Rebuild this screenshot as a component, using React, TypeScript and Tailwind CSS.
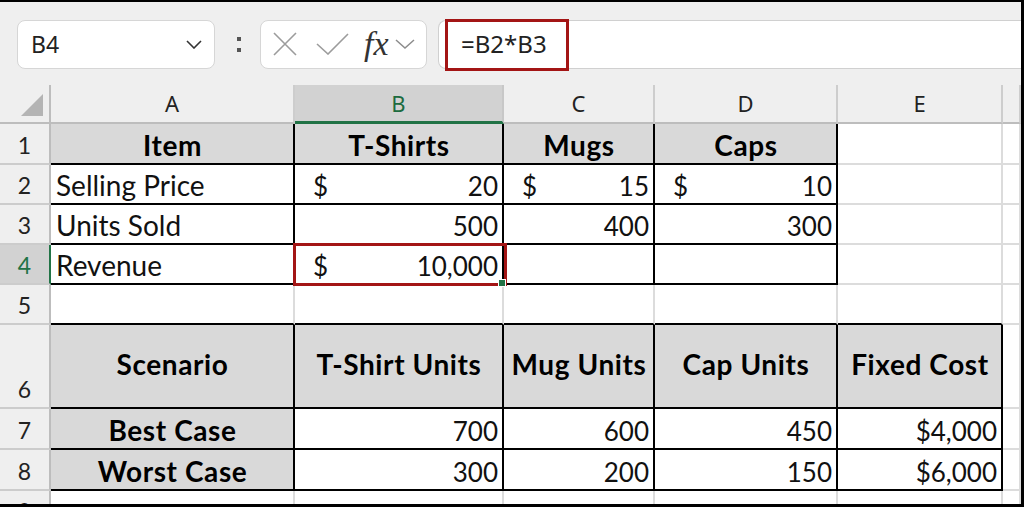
import clsx from "clsx";

type Cell = {
  t?: string;
  cur?: string;
  b?: boolean;
  fill?: boolean;
  al?: "l" | "c" | "r";
  box?: boolean;
  mid?: boolean;
  sel?: boolean;
};

const head = (t: string): Cell => ({ t, b: true, fill: true, al: "c", box: true });
const headMid = (t: string): Cell => ({ ...head(t), mid: true });
const label = (t: string): Cell => ({ t, al: "l", box: true });
const num = (t: string, cur?: string): Cell => ({ t, cur, al: "r", box: true });
const E: Cell = {};
const BX: Cell = { box: true };

const rows: Cell[][] = [
  [head("Item"), head("T-Shirts"), head("Mugs"), head("Caps"), E, E],
  [label("Selling Price"), num("20", "$"), num("15", "$"), num("10", "$"), E, E],
  [label("Units Sold"), num("500"), num("400"), num("300"), E, E],
  [label("Revenue"), { ...num("10,000", "$"), sel: true }, BX, BX, E, E],
  [E, E, E, E, E, E],
  [headMid("Scenario"), headMid("T-Shirt Units"), headMid("Mug Units"), headMid("Cap Units"), headMid("Fixed Cost"), E],
  [head("Best Case"), num("700"), num("600"), num("450"), num("$4,000"), E],
  [head("Worst Case"), num("300"), num("200"), num("150"), num("$6,000"), E],
  [E, E, E, E, E, E],
];

const cols = ["A", "B", "C", "D", "E", ""];

function SheetCell({ r, c }: { r: number; c: number }) {
  const cell = rows[r][c];
  const right = cell.box || rows[r][c + 1]?.box;
  const below = cell.box || rows[r + 1]?.[c]?.box;

  return (
    <div
      className={clsx(
        "relative flex border-r-2 border-b-2 pb-[4px] leading-none whitespace-nowrap",
        right ? "border-r-black" : "border-r-[#dcdcdc]",
        below ? "border-b-black" : "border-b-[#dcdcdc]",
        cell.fill ? "bg-[#d9d9d9]" : "bg-white",
        cell.mid ? "items-center" : "items-end",
        cell.cur ? "justify-between pl-[18px] pr-[4px]" : "pl-[5px] pr-[4px]",
        !cell.cur && (cell.al === "c" ? "justify-center" : cell.al === "r" ? "justify-end" : "justify-start"),
        cell.b
          ? "text-[28px] font-bold tracking-[0.6px] text-black"
          : cell.al === "l"
            ? "text-[28px] text-[#111]"
            : "text-[26px] text-[#111]"
      )}
    >
      {cell.cur && <span>{cell.cur}</span>}
      {cell.t && <span>{cell.t}</span>}
      {cell.sel && (
        <>
          <div className="absolute -left-[2px] -top-[2px] -right-[5px] -bottom-[3px] z-10 border-[3px] border-[#a31515]" />
          <div className="absolute -right-[4px] -bottom-[4px] z-20 h-[8px] w-[8px] border border-white bg-[#217346]" />
        </>
      )}
    </div>
  );
}

function FormulaBar() {
  return (
    <div className="flex h-[52px] shrink-0 items-center">
      <div className="ml-[17px] flex h-[49px] w-[198px] items-center justify-between rounded-[8px] border border-[#d6d6d6] bg-white pl-[13px] pr-[12px]">
        <span className="text-[23px] text-[#222] font-['Noto_Sans',sans-serif]">B4</span>
        <svg width="16" height="9" viewBox="0 0 16 9" fill="none">
          <path d="M1 1L8 8L15 1" stroke="#333" strokeWidth="1.6" />
        </svg>
      </div>

      <div className="ml-[22px] flex w-[4px] flex-col gap-[7px]">
        <div className="h-[4px] w-[4px] bg-[#555]" />
        <div className="h-[4px] w-[4px] bg-[#555]" />
      </div>

      <div className="ml-[19px] flex h-[49px] w-[167px] items-center rounded-[8px] border border-[#d6d6d6] bg-white pl-[12px]">
        <svg width="24" height="24" viewBox="0 0 24 24" fill="none">
          <path d="M1 1L23 23M23 1L1 23" stroke="#9c9c9c" strokeWidth="1.6" />
        </svg>
        <svg className="ml-[19px]" width="33" height="22" viewBox="0 0 33 22" fill="none">
          <path d="M1 11L12 21L32 1" stroke="#9c9c9c" strokeWidth="1.6" />
        </svg>
        <span className="ml-[15px] text-[34px] leading-none italic text-[#333] font-['Liberation_Serif',serif]">fx</span>
        <svg className="ml-[6px]" width="20" height="10" viewBox="0 0 20 10" fill="none">
          <path d="M1 1L10 9L19 1" stroke="#8c8c8c" strokeWidth="1.5" />
        </svg>
      </div>

      <div className="relative ml-[11px] flex h-[49px] flex-1 items-center rounded-l-[8px] border-y border-l border-[#d0d0d0] bg-white pl-[22px]">
        <span className="text-[24px] text-[#222] font-['Noto_Sans',sans-serif]">=B2*B3</span>
        <div className="absolute left-[6px] -top-[2px] h-[52px] w-[124px] border-[3px] border-[#a31515]" />
      </div>
    </div>
  );
}

export default function App() {
  return (
    <div className="flex h-[507px] w-[1024px] flex-col overflow-hidden border-t-2 border-r-[3px] border-b-[3px] border-black bg-[#efefef]">
      <div className="h-[16px] shrink-0" />
      <FormulaBar />
      <div className="h-[15px] shrink-0" />

      <div className="grid shrink-0 grid-cols-[51px_244px_209px_151px_183px_165px_1fr] grid-rows-[39px_41px_40px_40px_40px_40px_84px_41px_41px_40px] font-['Lato',sans-serif]">
        <div className="relative border-r-2 border-b-2 border-r-[#bdbdbd] border-b-[#bdbdbd] bg-[#efefef]">
          <svg className="absolute left-[21px] top-[9px]" width="22" height="22" viewBox="0 0 22 22">
            <path d="M22 0V22H0Z" fill="#b4b4b4" />
          </svg>
        </div>
        {cols.map((l, i) => (
          <div
            key={i}
            className={clsx(
              "flex items-center justify-center border-r-2 text-[22px] font-['Noto_Sans',sans-serif]",
              i === 1
                ? "border-b-[3px] border-r-[#c8c8c8] border-b-[#217346] bg-[#d2d2d2] text-[#1d6b3f]"
                : "border-b-2 border-r-[#cdcdcd] border-b-[#bdbdbd] bg-[#efefef] text-[#222]"
            )}
          >
            {l}
          </div>
        ))}

        {rows.map((row, r) => (
          <div key={r} className="contents">
            <div
              className={clsx(
                "flex items-end justify-center border-r-2 border-b-2 border-b-[#cccccc] pb-[6px] text-[23px] leading-none",
                r === 3 ? "border-r-[#217346] bg-[#d2d2d2] text-[#217346]" : "border-r-[#bdbdbd] bg-[#efefef] text-[#222]"
              )}
            >
              {r + 1}
            </div>
            {row.map((_, c) => (
              <SheetCell key={c} r={r} c={c} />
            ))}
          </div>
        ))}
      </div>
    </div>
  );
}
